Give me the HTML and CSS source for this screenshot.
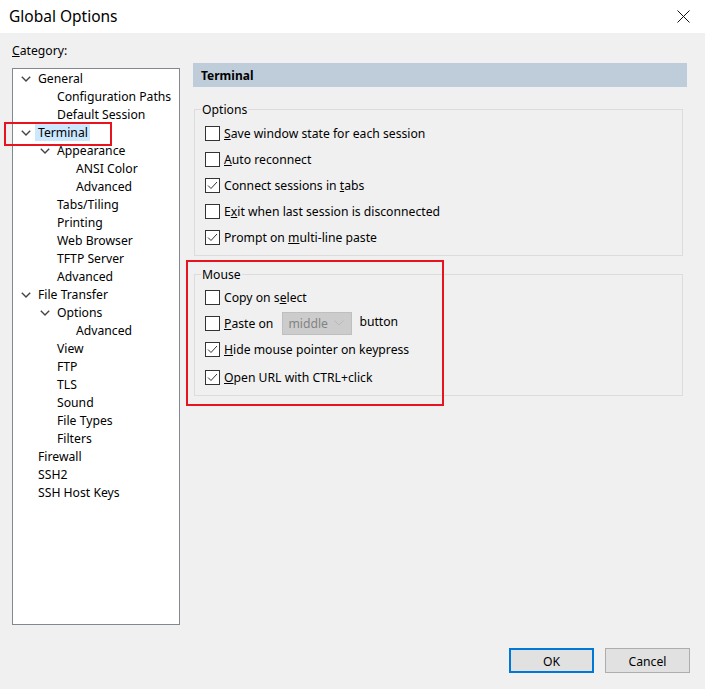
FILE: index.html
```html
<!DOCTYPE html>
<html>
<head>
<meta charset="utf-8">
<link rel="stylesheet" href="styles.css">
</head>
<body>
<div class="window">
  <div class="titlebar">
    <span class="title">Global Options</span>
    <svg class="close" width="13" height="13" viewBox="0 0 13 13"><path d="M0.5 0.5 L12.5 12.5 M12.5 0.5 L0.5 12.5" stroke="#111" stroke-width="1" fill="none"/></svg>
  </div>
  <div class="main">
    <div class="left">
      <div class="cat-label"><u>C</u>ategory:</div>
      <div class="tree">
        <div class="item l0"><span class="chev"><svg width="10" height="6" viewBox="0 0 10 6"><path d="M0.8 0.8 L5 5 L9.2 0.8" stroke="#444" stroke-width="1.4" fill="none"/></svg></span><span class="txt">General</span></div>
        <div class="item l1"><span class="chev"></span><span class="txt">Configuration Paths</span></div>
        <div class="item l1"><span class="chev"></span><span class="txt">Default Session</span></div>
        <div class="item l0"><span class="chev"><svg width="10" height="6" viewBox="0 0 10 6"><path d="M0.8 0.8 L5 5 L9.2 0.8" stroke="#444" stroke-width="1.4" fill="none"/></svg></span><span class="txt sel">Terminal</span></div>
        <div class="item l1"><span class="chev"><svg width="10" height="6" viewBox="0 0 10 6"><path d="M0.8 0.8 L5 5 L9.2 0.8" stroke="#444" stroke-width="1.4" fill="none"/></svg></span><span class="txt">Appearance</span></div>
        <div class="item l2"><span class="chev"></span><span class="txt">ANSI Color</span></div>
        <div class="item l2"><span class="chev"></span><span class="txt">Advanced</span></div>
        <div class="item l1"><span class="chev"></span><span class="txt">Tabs/Tiling</span></div>
        <div class="item l1"><span class="chev"></span><span class="txt">Printing</span></div>
        <div class="item l1"><span class="chev"></span><span class="txt">Web Browser</span></div>
        <div class="item l1"><span class="chev"></span><span class="txt">TFTP Server</span></div>
        <div class="item l1"><span class="chev"></span><span class="txt">Advanced</span></div>
        <div class="item l0"><span class="chev"><svg width="10" height="6" viewBox="0 0 10 6"><path d="M0.8 0.8 L5 5 L9.2 0.8" stroke="#444" stroke-width="1.4" fill="none"/></svg></span><span class="txt">File Transfer</span></div>
        <div class="item l1"><span class="chev"><svg width="10" height="6" viewBox="0 0 10 6"><path d="M0.8 0.8 L5 5 L9.2 0.8" stroke="#444" stroke-width="1.4" fill="none"/></svg></span><span class="txt">Options</span></div>
        <div class="item l2"><span class="chev"></span><span class="txt">Advanced</span></div>
        <div class="item l1"><span class="chev"></span><span class="txt">View</span></div>
        <div class="item l1"><span class="chev"></span><span class="txt">FTP</span></div>
        <div class="item l1"><span class="chev"></span><span class="txt">TLS</span></div>
        <div class="item l1"><span class="chev"></span><span class="txt">Sound</span></div>
        <div class="item l1"><span class="chev"></span><span class="txt">File Types</span></div>
        <div class="item l1"><span class="chev"></span><span class="txt">Filters</span></div>
        <div class="item l0"><span class="chev"></span><span class="txt">Firewall</span></div>
        <div class="item l0"><span class="chev"></span><span class="txt">SSH2</span></div>
        <div class="item l0"><span class="chev"></span><span class="txt">SSH Host Keys</span></div>
      </div>
    </div>
    <div class="right">
      <div class="header">Terminal</div>
      <fieldset class="group">
        <legend>Options</legend>
        <div class="row"><span class="cb"></span><span><u>S</u>ave window state for each session</span></div>
        <div class="row"><span class="cb"></span><span><u>A</u>uto reconnect</span></div>
        <div class="row"><span class="cb checked"><svg width="13" height="13" viewBox="0 0 13 13"><path d="M2 6.5 L5 9.5 L11 3" stroke="#333" stroke-width="1" fill="none"/></svg></span><span>Connect sessions in <u>t</u>abs</span></div>
        <div class="row"><span class="cb"></span><span>E<u>x</u>it when last session is disconnected</span></div>
        <div class="row"><span class="cb checked"><svg width="13" height="13" viewBox="0 0 13 13"><path d="M2 6.5 L5 9.5 L11 3" stroke="#333" stroke-width="1" fill="none"/></svg></span><span>Prompt on <u>m</u>ulti-line paste</span></div>
      </fieldset>
      <fieldset class="group mouse">
        <legend>Mouse</legend>
        <div class="row"><span class="cb"></span><span>Copy on s<u>e</u>lect</span></div>
        <div class="row"><span class="cb"></span><span><u>P</u>aste on</span>
          <span class="select"><span class="sel-text">middle</span><svg width="10" height="6" viewBox="0 0 10 6"><path d="M0.5 0.5 L5 5 L9.5 0.5" stroke="#b8b8b8" stroke-width="1" fill="none"/></svg></span>
          <span class="after">button</span></div>
        <div class="row"><span class="cb checked"><svg width="13" height="13" viewBox="0 0 13 13"><path d="M2 6.5 L5 9.5 L11 3" stroke="#333" stroke-width="1" fill="none"/></svg></span><span><u>H</u>ide mouse pointer on keypress</span></div>
        <div class="row last"><span class="cb checked"><svg width="13" height="13" viewBox="0 0 13 13"><path d="M2 6.5 L5 9.5 L11 3" stroke="#333" stroke-width="1" fill="none"/></svg></span><span><u>O</u>pen URL with CTRL+click</span></div>
      </fieldset>
    </div>
  </div>
  <div class="footer">
    <button class="btn default">OK</button>
    <button class="btn">Cancel</button>
  </div>
  <div class="mark mark-terminal"></div>
  <div class="mark mark-mouse"></div>
</div>
</body>
</html>
```

FILE: styles.css
```css
* { box-sizing: border-box; }
html, body { margin: 0; padding: 0; }
body {
  font-family: "Noto Sans", "Open Sans", sans-serif;
  font-size: 12.2px;
  color: #000;
  background: #f0f0f0;
}
.window {
  position: relative;
  width: 705px;
  height: 689px;
  background: #f0f0f0;
  display: flex;
  flex-direction: column;
  overflow: hidden;
}
.titlebar {
  height: 33px;
  background: #fff;
  display: flex;
  align-items: center;
  justify-content: space-between;
  padding: 0 15px 2px 9px;
}
.title {
  font-size: 15.5px;
  color: #000;
}
.close { display: block; margin-top: 1px; }
.main {
  display: flex;
  padding: 0 12px;
}
.left {
  width: 168px;
  padding-top: 10px;
}
.cat-label {
  height: 16px;
  line-height: 16px;
  margin-bottom: 9px;
}
.tree {
  height: 557px;
  background: #fff;
  border: 1px solid #828790;
}
.item {
  height: 18px;
  display: flex;
  align-items: center;
  white-space: nowrap;
}
.item.l0 { padding-left: 6px; }
.item.l1 { padding-left: 25px; }
.item.l2 { padding-left: 44px; }
.chev {
  width: 19px;
  height: 18px;
  display: flex;
  align-items: center;
  padding-left: 2px;
  padding-top: 1px;
}
.chev svg { display: block; }
.txt {
  line-height: 17px;
  padding: 0 2px;
  margin-left: -2px;
}
.txt.sel {
  background: #cce8ff;
  padding: 0 2px 0 3px;
  margin-left: -3px;
}
.right {
  margin-left: 13px;
  width: 494px;
  padding-top: 30px;
}
.header {
  height: 24px;
  line-height: 23px;
  padding-top: 1px;
  background: #bfcddb;
  font-weight: bold;
  padding-left: 8px;
  font-size: 12px;
}
.group {
  margin: 14px 4px 0 1px;
  padding: 3px 10px 5px 10px;
  border: 1px solid #dcdcdc;
  min-width: 0;
}
.group.mouse {
  margin-top: 10px;
  padding-top: 2px;
  padding-bottom: 5px;
}
.group legend {
  padding: 2px 1px 0 1px;
  margin-left: -4px;
  line-height: 14px;
  height: 16px;
}
.row {
  height: 26px;
  display: flex;
  align-items: center;
  white-space: nowrap;
}
.row.last { height: 28px; padding-top: 2px; }
.cb {
  width: 15px;
  height: 15px;
  border: 1px solid #333;
  background: #fff;
  margin-right: 4px;
  display: flex;
  align-items: center;
  justify-content: center;
  flex: none;
}
.cb svg { display: block; }
.select {
  margin-left: 9px;
  width: 70px;
  height: 23px;
  background: #cccccc;
  border: 1px solid #bfbfbf;
  display: flex;
  align-items: center;
  justify-content: space-between;
  padding: 0 7px 0 5px;
  color: #838383;
}
.after {
  margin-left: 7px;
  margin-top: -4px;
}
.footer {
  display: flex;
  justify-content: flex-end;
  gap: 11px;
  padding: 23px 15px 16px 0;
}
.btn {
  width: 85px;
  height: 25px;
  background: #e1e1e1;
  border: 1px solid #adadad;
  font-family: "Noto Sans", "Open Sans", sans-serif;
  font-size: 12.2px;
  color: #000;
  padding: 1px 0 0 0;
  margin: 0;
}
.btn.default {
  border: 2px solid #0078d7;
}
.mark {
  position: absolute;
  border: 2px solid #e5141e;
}
.mark-terminal {
  left: 4px;
  top: 122px;
  width: 108px;
  height: 24px;
}
.mark-mouse {
  left: 186px;
  top: 260px;
  width: 258px;
  height: 146px;
}
```
